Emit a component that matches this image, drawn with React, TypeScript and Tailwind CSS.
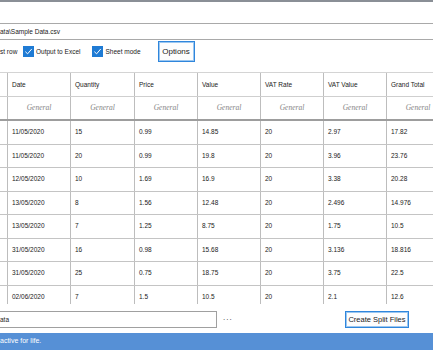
import React from 'react';

const font = { fontFamily: '"Liberation Sans", Arial, sans-serif' };

const columns = ['Date', 'Quantity', 'Price', 'Value', 'VAT Rate', 'VAT Value', 'Grand Total'];
const widths = ['w-[63px]', 'w-[64px]', 'w-[63px]', 'w-[63px]', 'w-[63px]', 'w-[63px]', 'w-[63px]'];

const rows = [
  ['11/05/2020', '15', '0.99', '14.85', '20', '2.97', '17.82'],
  ['11/05/2020', '20', '0.99', '19.8', '20', '3.96', '23.76'],
  ['12/05/2020', '10', '1.69', '16.9', '20', '3.38', '20.28'],
  ['13/05/2020', '8', '1.56', '12.48', '20', '2.496', '14.976'],
  ['13/05/2020', '7', '1.25', '8.75', '20', '1.75', '10.5'],
  ['31/05/2020', '16', '0.98', '15.68', '20', '3.136', '18.816'],
  ['31/05/2020', '25', '0.75', '18.75', '20', '3.75', '22.5'],
  ['02/06/2020', '7', '1.5', '10.5', '20', '2.1', '12.6'],
];

function Check({ label }: { label: string }) {
  return (
    <div className="flex items-center gap-[2px]">
      <div className="w-[11px] h-[11px] bg-[#1f7bd4] flex items-center justify-center">
        <svg width="9" height="9" viewBox="0 0 10 10">
          <path d="M1.5 5.2 L4 7.6 L8.6 2.2" fill="none" stroke="white" strokeWidth="1.1" />
        </svg>
      </div>
      <span className="text-[6.5px] text-[#1a1a1a]">{label}</span>
    </div>
  );
}

export default function App() {
  return (
    <div className="w-[433px] h-[350px] overflow-hidden bg-white flex flex-col" style={font}>
      {/* window top edge */}
      <div className="h-[23px] border-t-2 border-[#8a8f96] shrink-0" />

      {/* source path */}
      <div className="h-[17px] shrink-0 border-y border-[#a9a9a9] flex items-center text-[6.5px] text-[#1a1a1a] overflow-hidden">
        <span className="whitespace-nowrap">ata\Sample Data.csv</span>
      </div>

      {/* options row */}
      <div className="h-[21px] mt-[1px] shrink-0 flex items-center text-[6.5px] text-[#1a1a1a]">
        <span className="w-[23px]">st row</span>
        <Check label="Output to Excel" />
        <div className="ml-[12px]">
          <Check label="Sheet mode" />
        </div>
        <button className="ml-[17px] w-[37px] h-[21px] border border-[#2f86dc] shadow-[inset_0_0_0_1px_#9cc7f0] bg-[#fdfdfd] text-[8px] text-[#1a1a1a] flex items-center justify-center">
          Options
        </button>
      </div>

      {/* data grid */}
      <div className="mt-[10px] h-[232px] shrink-0 overflow-hidden border-t border-[#d4d4d4] text-[6.5px] text-[#1a1a1a]">
        <div className="flex h-[24px] border-b border-[#cfcfcf]">
          <div className="w-[8px] shrink-0 border-r border-[#bdbdbd]" />
          {columns.map((c, i) => (
            <div key={c} className={`${widths[i]} shrink-0 border-r border-[#bdbdbd] pl-[4px] flex items-center`}>
              {c}
            </div>
          ))}
        </div>
        <div className="flex h-[24px] border-b-2 border-[#9d9d9d]">
          <div className="w-[8px] shrink-0 border-r border-[#bdbdbd]" />
          {columns.map((c, i) => (
            <div
              key={c}
              className={`${widths[i]} shrink-0 border-r border-[#bdbdbd] flex items-center justify-center italic text-[7.5px] text-[#858585]`}
              style={{ fontFamily: '"Liberation Serif", serif' }}
            >
              General
            </div>
          ))}
        </div>
        {rows.map((r, ri) => (
          <div key={ri} className="flex h-[23.5px] border-b border-[#c4c4c4]">
            <div className="w-[8px] shrink-0 border-r border-[#bdbdbd]" />
            {r.map((v, i) => (
              <div key={i} className={`${widths[i]} shrink-0 border-r border-[#bdbdbd] pl-[4px] flex items-center`}>
                {v}
              </div>
            ))}
          </div>
        ))}
      </div>

      {/* output row */}
      <div className="mt-[7px] h-[17px] shrink-0 flex items-center">
        <div className="w-[217px] h-[17px] border-y border-r border-[#a0a0a0] flex items-center text-[6.5px] text-[#1a1a1a]">
          ata
        </div>
        <span className="ml-[6px] text-[8px] text-[#333] tracking-[1px] -mt-[3px]">...</span>
        <button className="ml-auto mr-[24px] w-[64px] h-[17px] border border-[#2f86dc] shadow-[inset_0_0_0_1px_#9cc7f0] bg-[#fdfdfd] text-[7.5px] text-[#1a1a1a] flex items-center justify-center">
          Create Split Files
        </button>
      </div>

      {/* status bar */}
      <div className="mt-[5px] h-[17px] shrink-0 bg-[#5690d6] flex items-center text-[7px] text-white">
        active for life.
      </div>
    </div>
  );
}
